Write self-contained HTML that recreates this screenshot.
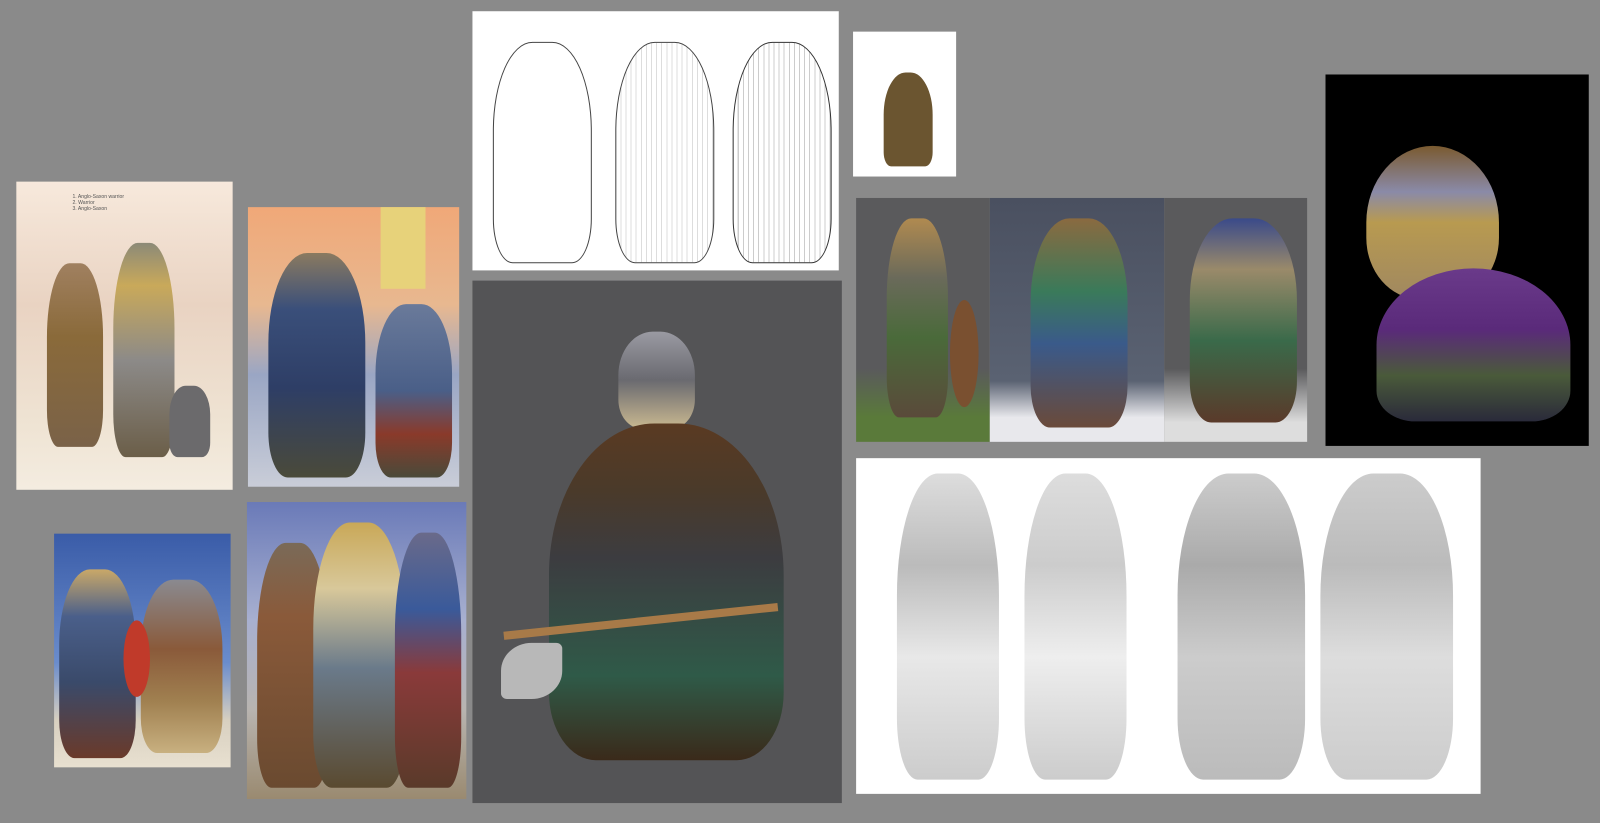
<!DOCTYPE html>
<html><head><meta charset="utf-8"><style>
body{margin:0;width:1600px;height:823px;background:#8a8a8a;position:relative;overflow:hidden;font-family:"Liberation Sans",sans-serif}
#w{position:absolute;left:0;top:0;width:1568px;height:807px;transform:scale(1.0204);transform-origin:0 0}
.b{position:absolute}
.fig{position:absolute;border-radius:40% 40% 20% 20%}
</style></head><body><div id="w">
<div class="b" style="left:16px;top:178px;width:212px;height:302px;background:linear-gradient(#f7e9dc,#e9d3c2 40%,#efe4d4 80%,#f4ece0)">
 <div class="b" style="left:55px;top:12px;font-size:5px;color:#555;line-height:6px">1. Anglo-Saxon warrior<br>2. Warrior<br>3. Anglo-Saxon</div>
 <div class="fig" style="left:95px;top:60px;width:60px;height:210px;background:linear-gradient(#8c8a78,#c9a95a 20%,#8c8a88 55%,#6b5e48)"></div>
 <div class="fig" style="left:30px;top:80px;width:55px;height:180px;background:linear-gradient(#a08060,#8a6a3a 40%,#7a6248)"></div>
 <div class="fig" style="left:150px;top:200px;width:40px;height:70px;background:#6b6a6c"></div>
</div>
<div class="b" style="left:243px;top:203px;width:207px;height:274px;background:linear-gradient(#f0a878,#e8b890 35%,#9aa6c4 60%,#c9cdd8)">
 <div class="b" style="left:130px;top:0;width:44px;height:80px;background:#e7d27a"></div>
 <div class="fig" style="left:20px;top:45px;width:95px;height:220px;background:linear-gradient(#8a7a60,#3a4f7a 25%,#2e3e66 60%,#4a4a3a)"></div>
 <div class="fig" style="left:125px;top:95px;width:75px;height:170px;background:linear-gradient(#6a7a9a,#4a5f88 50%,#8a3a2a 75%,#4a4a3a)"></div>
</div>
<div class="b" style="left:53px;top:523px;width:173px;height:229px;background:linear-gradient(#3a5ca8,#6a8ccc 55%,#d8d0c0 80%,#e8e0d0)">
 <div class="fig" style="left:5px;top:35px;width:75px;height:185px;background:linear-gradient(#c9a868,#4a5f8a 25%,#3a4a6a 60%,#6a3a2a)"></div>
 <div class="fig" style="left:85px;top:45px;width:80px;height:170px;background:linear-gradient(#8a8a90,#8a5a3a 40%,#a08050 70%,#c8b080)"></div>
 <div class="b" style="left:68px;top:85px;width:26px;height:75px;border-radius:50%;background:#c03a2a"></div>
</div>
<div class="b" style="left:242px;top:492px;width:215px;height:291px;background:linear-gradient(#6a7ab8,#a8b0d0 40%,#b8b4b0 70%,#9a8a70)">
 <div class="fig" style="left:10px;top:40px;width:70px;height:240px;background:linear-gradient(#7a6a58,#8a5a3a 30%,#6a4a30)"></div>
 <div class="fig" style="left:65px;top:20px;width:90px;height:260px;background:linear-gradient(#c9a858,#d8c89a 25%,#6a7a8a 55%,#5a4a30)"></div>
 <div class="fig" style="left:145px;top:30px;width:65px;height:250px;background:linear-gradient(#6a6a8a,#3a5a9a 30%,#8a3a3a 55%,#5a3a2a)"></div>
</div>
<div class="b" style="left:463px;top:11px;width:359px;height:254px;background:#fff">
 <div class="fig" style="left:20px;top:30px;width:95px;height:215px;border:1.5px solid #444;background:none"></div>
 <div class="fig" style="left:140px;top:30px;width:95px;height:215px;border:1.5px solid #444;background:repeating-linear-gradient(90deg,#fff 0 4px,#ddd 4px 5px)"></div>
 <div class="fig" style="left:255px;top:30px;width:95px;height:215px;border:1.5px solid #333;background:repeating-linear-gradient(90deg,#fff 0 4px,#ccc 4px 5px)"></div>
</div>
<div class="b" style="left:463px;top:275px;width:362px;height:512px;background:#545456">
 <div class="b" style="left:143px;top:50px;width:75px;height:95px;border-radius:45% 45% 30% 30%;background:linear-gradient(#9a9aa2,#6a6a70 50%,#c9b890)"></div>
 <div class="b" style="left:75px;top:140px;width:230px;height:330px;border-radius:45% 45% 20% 20%;background:linear-gradient(#5a3a22,#4a3a2a 20%,#3c3c40 40%,#2f5a48 75%,#3a2a1a)"></div>
 <div class="b" style="left:30px;top:330px;width:270px;height:8px;background:#a87a48;transform:rotate(-6deg)"></div>
 <div class="b" style="left:28px;top:355px;width:60px;height:55px;border-radius:50% 10% 50% 10%;background:#b8b8b8"></div>
</div>
<div class="b" style="left:836px;top:31px;width:101px;height:142px;background:#fff">
 <div class="b" style="left:30px;top:40px;width:48px;height:92px;border-radius:45% 45% 15% 15%;background:#6b5530"></div>
</div>
<div class="b" style="left:839px;top:194px;width:131px;height:239px;background:linear-gradient(#5a5a5c 70%,#5a7a3a 90%)">
 <div class="fig" style="left:30px;top:20px;width:60px;height:195px;background:linear-gradient(#b08a50,#6a6a5a 30%,#4a6a3a 60%,#5a4a3a)"></div>
 <div class="b" style="left:92px;top:100px;width:28px;height:105px;border-radius:50%;background:#7a5030"></div>
</div>
<div class="b" style="left:970px;top:194px;width:171px;height:239px;background:linear-gradient(#4a5060,#5a6272 75%,#e8e8ec 90%)">
 <div class="fig" style="left:40px;top:20px;width:95px;height:205px;background:linear-gradient(#8a6a40,#3a7a5a 35%,#3a5a8a 60%,#6a4a3a)"></div>
</div>
<div class="b" style="left:1141px;top:194px;width:140px;height:239px;background:linear-gradient(#5a5a5c 70%,#ddd 92%)">
 <div class="fig" style="left:25px;top:20px;width:105px;height:200px;background:linear-gradient(#3a4a8a,#9a8a6a 25%,#3a6a4a 60%,#5a3a2a)"></div>
</div>
<div class="b" style="left:1299px;top:73px;width:258px;height:364px;background:#000">
 <div class="b" style="left:40px;top:70px;width:130px;height:150px;border-radius:50% 50% 40% 40%;background:linear-gradient(#7a5a30,#8a8aa8 30%,#b89a50 50%,#a08860)"></div>
 <div class="b" style="left:50px;top:190px;width:190px;height:150px;border-radius:50% 50% 20% 20%;background:linear-gradient(#6a3a8a,#5a2a7a 40%,#4a5a3a 70%,#2a2a3a)"></div>
</div>
<div class="b" style="left:839px;top:449px;width:612px;height:329px;background:#fff">
 <div class="fig" style="left:40px;top:15px;width:100px;height:300px;background:linear-gradient(#ddd,#bbb 30%,#e8e8e8 60%,#ccc)"></div>
 <div class="fig" style="left:165px;top:15px;width:100px;height:300px;background:linear-gradient(#ddd,#ccc 30%,#eee 60%,#ccc)"></div>
 <div class="fig" style="left:315px;top:15px;width:125px;height:300px;background:linear-gradient(#ccc,#aaa 30%,#ccc 60%,#bbb)"></div>
 <div class="fig" style="left:455px;top:15px;width:130px;height:300px;background:linear-gradient(#ccc,#bbb 30%,#ddd 60%,#ccc)"></div>
</div>
</div></body></html>
